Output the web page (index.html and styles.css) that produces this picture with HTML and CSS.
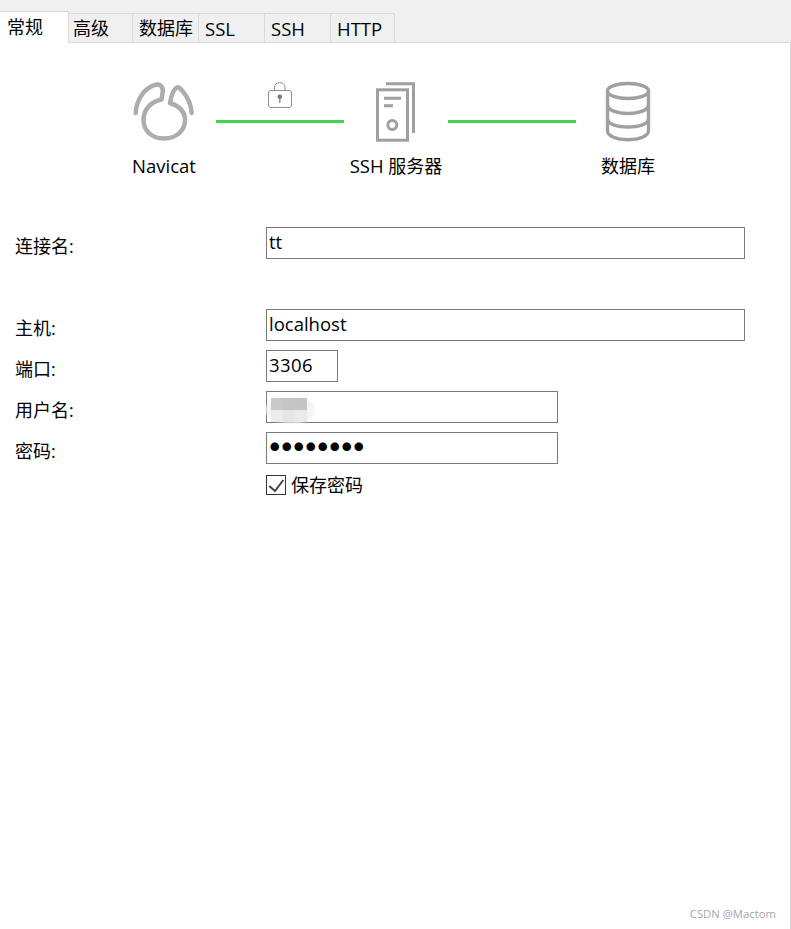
FILE: index.html
```
<!DOCTYPE html>
<html lang="zh-CN">
<head>
<meta charset="utf-8">
<title>连接</title>
<link rel="stylesheet" href="styles.css">
</head>
<body>
<div class="tabbar">
  <div class="tab tab-active tab-w69">常规</div>
  <div class="tab tab-tight tab-w64">高级</div>
  <div class="tab tab-w66">数据库</div>
  <div class="tab tab-w66 latin">SSL</div>
  <div class="tab tab-w66 latin">SSH</div>
  <div class="tab tab-w64 latin">HTTP</div>
</div>
<main class="panel">
  <div class="diagram">
    <div class="node">
      <svg class="icon" width="64" height="64" viewBox="0 0 64 64"><path d="M3.700 32C4 20 12 6 24.700 3.500C30 3 31.500 8 30.500 12C30 15 30 16.500 29.500 18.500C18 21 11.500 29 11.500 39C11.500 50 20 57.500 32 57.500C44 57.500 53 50 53 39C53 31 47 25 38 22C39 16 41 10 43.500 7.500C46 5 48 7 50 9.500C55 15 59 24 59.700 32" fill="none" stroke="#adadad" stroke-width="4.500" stroke-linecap="round" stroke-linejoin="round"/></svg>
      <div class="node-label latin">Navicat</div>
    </div>
    <div class="connector">
      <svg class="lock" width="26" height="26" viewBox="0 0 26 26"><g fill="none" stroke="#8f8f8f" stroke-width="1"><rect x="1.500" y="8.500" width="23" height="17" rx="2.500"/><path d="M7.500 8.500V5.500a5.250 5 0 0 1 10.500 0v3"/></g><circle cx="12.800" cy="14.700" r="2.300" fill="#7a7a7a"/><path d="M12.800 15.500V21" stroke="#7a7a7a" stroke-width="1.200"/></svg>
      <div class="link"></div>
    </div>
    <div class="node">
      <svg class="icon" width="64" height="64" viewBox="0 0 64 64"><g fill="none" stroke="#a0a0a0" stroke-width="3"><rect x="13.500" y="8.800" width="30" height="50.400"/><path d="M22 2.800H49.500V52"/><path d="M20 17.300H37M20 24.700H29"/><circle cx="28.300" cy="44" r="4.500"/></g></svg>
      <div class="node-label"><span class="latin">SSH</span> 服务器</div>
    </div>
    <div class="connector">
      <div class="lock-spacer"></div>
      <div class="link"></div>
    </div>
    <div class="node">
      <svg class="icon" width="64" height="64" viewBox="0 0 64 64"><g fill="none" stroke="#a0a0a0" stroke-width="3.400"><ellipse cx="32" cy="10" rx="20.500" ry="7.500"/><path d="M11.500 10V50C11.500 55 21 58.700 32 58.700C43 58.700 52.500 55 52.500 50V10"/><path d="M11.500 24C11.500 29 21 32.500 32 32.500C43 32.500 52.500 29 52.500 24"/><path d="M11.500 38C11.500 43 21 46 32 46C43 46 52.500 43 52.500 38"/></g></svg>
      <div class="node-label">数据库</div>
    </div>
  </div>
  <form class="form">
    <label class="row row-first"><span class="label">连接名:</span><span class="field field-wide">tt</span></label>
    <label class="row"><span class="label">主机:</span><span class="field field-wide">localhost</span></label>
    <label class="row"><span class="label">端口:</span><span class="field field-port">3306</span></label>
    <label class="row"><span class="label">用户名:</span><span class="field field-mid"><span class="smear"></span><span class="blur"><i class="px p1"></i><i class="px p2"></i><i class="px p3"></i><i class="px p4"></i><i class="px p5"></i><i class="px p6"></i></span></span></label>
    <label class="row"><span class="label">密码:</span><span class="field field-mid field-pass">●●●●●●●●</span></label>
    <div class="check-row">
      <span class="checkbox"><svg width="20" height="20" viewBox="0 0 20 20"><path d="M3.300 11L9 16L17.300 5" fill="none" stroke="#444" stroke-width="2"/></svg></span>
      <span class="check-text">保存密码</span>
    </div>
  </form>
</main>
<div class="edge"></div>
<div class="watermark">CSDN @Mactom</div>
</body>
</html>
```
FILE: styles.css
```
html, body { margin: 0; padding: 0; }
body {
  width: 791px; height: 929px; position: relative; overflow: hidden; background: #fff; color: #000;
  font-family: "Open Sans", "Noto Sans CJK SC", sans-serif; font-size: 18px; line-height: 24px;
}
.latin { font-size: 18.500px; }
.tabbar {
  display: flex; align-items: flex-end; height: 42px; background: #f0f0f0; border-bottom: 1px solid #d9d9d9;
}
.tab {
  box-sizing: border-box; height: 29px; padding-left: 6px; border-top: 1px solid #d9d9d9; border-right: 1px solid #d9d9d9;
  line-height: 29px; white-space: nowrap;
}
.tab-w69 { width: 69px; }
.tab-w64 { width: 64px; }
.tab-w66 { width: 66px; }
.tab-tight { padding-left: 4px; }
.tab-active { height: 32px; margin-bottom: -1px; background: #fff; padding-left: 7px; line-height: 31px; }
.panel { display: block; }
.diagram { display: flex; padding: 38px 0 0 112px; }
.node { width: 104px; display: flex; flex-direction: column; align-items: center; }
.icon { display: block; }
.node-label { margin-top: 9px; white-space: nowrap; }
.connector { width: 128px; display: flex; flex-direction: column; align-items: center; }
.lock { display: block; margin-top: 1px; }
.lock-spacer { height: 27px; }
.link { width: 128px; height: 3px; margin-top: 12px; background: #3fd44b; }
.form { padding: 49px 0 0 15px; }
.row { display: flex; align-items: center; height: 32px; margin-bottom: 9px; }
.row-first { margin-bottom: 50px; }
.label { width: 251px; flex: none; padding-top: 6px; }
.field {
  box-sizing: border-box; height: 32px; border: 1px solid #7a7a7a; padding-left: 2px; line-height: 28px; display: block; position: relative; font-size: 18.500px;
}
.field-wide { width: 479px; }
.field-port { width: 72px; letter-spacing: 0.400px; }
.field-mid { width: 292px; }
.field-pass { font-size: 9.500px; letter-spacing: 2.500px; padding-left: 3px; }
.smear { position: absolute; left: -1px; top: 7px; width: 48px; height: 24px; border-radius: 40% 30% 40% 50%; background: #f4f4f4; filter: blur(1px); }
.blur { position: absolute; left: 4px; top: 6px; display: grid; grid-template-columns: repeat(3, 12px); grid-auto-rows: 12px; }
.px { display: block; }
.p1 { background: #c9c9cc; } .p2 { background: #c6c6c8; } .p3 { background: #c4c4c6; }
.p4 { background: #ececec; } .p5 { background: #e6e6e6; } .p6 { background: #eaeaea; }
.check-row { display: flex; align-items: center; margin: 0 0 0 251px; }
.checkbox { box-sizing: border-box; width: 20px; height: 20px; border: 1px solid #333; display: block; }
.checkbox svg { display: block; margin: -1px; }
.check-text { margin-left: 5px; }
.edge { position: absolute; right: 0; top: 43px; bottom: 0; width: 1px; background: #d9d9d9; }
.watermark { position: absolute; right: 15px; top: 906px; font-size: 11.300px; line-height: 16px; color: #a6a6a6; }
```
